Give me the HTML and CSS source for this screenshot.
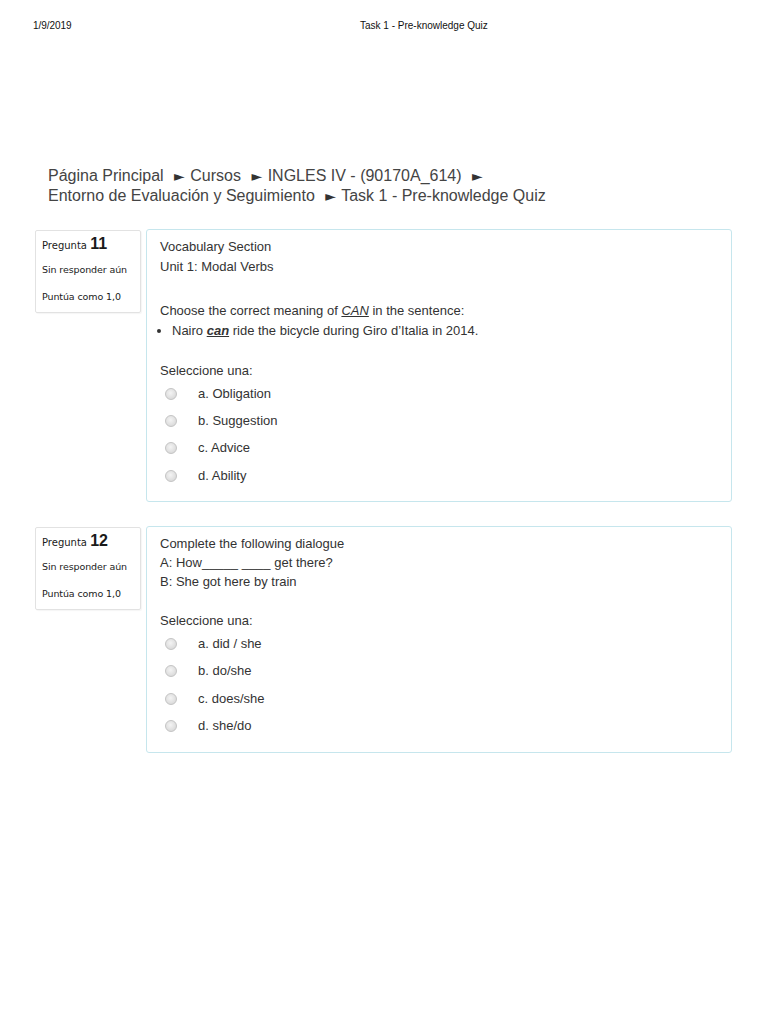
FILE: index.html
```html
<!DOCTYPE html>
<html lang="es">
<head>
<meta charset="utf-8">
<title>Task 1 - Pre-knowledge Quiz</title>
<link rel="stylesheet" href="styles.css">
</head>
<body>
<header class="print-head">
  <span class="print-date">1/9/2019</span>
  <span class="print-title">Task 1 - Pre-knowledge Quiz</span>
</header>

<nav class="breadcrumb">
  <div>Página Principal <span class="sep">►</span> Cursos <span class="sep">►</span> INGLES IV - (90170A_614) <span class="sep">►</span></div>
  <div>Entorno de Evaluación y Seguimiento <span class="sep">►</span> Task 1 - Pre-knowledge Quiz</div>
</nav>

<section class="que">
  <div class="info">
    <h3 class="no">Pregunta <span class="qno">11</span></h3>
    <div class="state">Sin responder aún</div>
    <div class="grade">Puntúa como 1,0</div>
  </div>
  <div class="content">
    <div class="qtext">
      <p class="intro">Vocabulary Section<br>Unit 1: Modal Verbs</p>
      <p class="ask">Choose the correct meaning of <em class="u">CAN</em> in the sentence:</p>
      <ul class="bullets"><li>Nairo <strong class="u"><em>can</em></strong> ride the bicycle during Giro d’Italia in 2014.</li></ul>
    </div>
    <div class="prompt">Seleccione una:</div>
    <div class="answer">
      <div class="opt"><span class="radio"></span><span>a. Obligation</span></div>
      <div class="opt"><span class="radio"></span><span>b. Suggestion</span></div>
      <div class="opt"><span class="radio"></span><span>c. Advice</span></div>
      <div class="opt"><span class="radio"></span><span>d. Ability</span></div>
    </div>
  </div>
</section>

<section class="que">
  <div class="info">
    <h3 class="no">Pregunta <span class="qno">12</span></h3>
    <div class="state">Sin responder aún</div>
    <div class="grade">Puntúa como 1,0</div>
  </div>
  <div class="content">
    <div class="qtext">
      <p class="dialog">Complete the following dialogue<br>A: How_____ ____ get there?<br>B: She got here by train</p>
    </div>
    <div class="prompt">Seleccione una:</div>
    <div class="answer">
      <div class="opt"><span class="radio"></span><span>a. did / she</span></div>
      <div class="opt"><span class="radio"></span><span>b. do/she</span></div>
      <div class="opt"><span class="radio"></span><span>c. does/she</span></div>
      <div class="opt"><span class="radio"></span><span>d. she/do</span></div>
    </div>
  </div>
</section>
</body>
</html>
```

FILE: styles.css
```css
html, body {
  margin: 0;
  padding: 0;
  background: #fff;
}
body {
  font-family: "Liberation Sans", Arial, sans-serif;
  color: #333;
  width: 768px;
}

.print-head {
  display: flex;
  align-items: center;
  height: 18px;
  padding-top: 16px;
  font-size: 10px;
  color: #111;
}
.print-date {
  margin-left: 33px;
  width: 327px;
  letter-spacing: -0.05px;
}
.print-title {
  letter-spacing: 0;
}

.breadcrumb {
  margin-top: 132px;
  margin-left: 48px;
  font-size: 16px;
  line-height: 20px;
  color: #444;
}
.breadcrumb .sep {
  font-family: "DejaVu Sans", sans-serif;
  font-size: 14px;
  line-height: 1;
  margin: 0 1px 0 6px;
  color: #333;
}

.que {
  display: flex;
  align-items: flex-start;
  gap: 5px;
  margin-left: 35px;
  width: 697px;
  margin-top: 23px;
}
.que + .que {
  margin-top: 24px;
}

.info {
  width: 93px;
  height: 74px;
  margin-top: 1px;
  padding: 4px 5px 3px 6px;
  border: 1px solid #e2e2e2;
  border-radius: 2px;
  box-shadow: 1px 1px 1px rgba(0,0,0,0.04);
  font-family: "DejaVu Sans", Verdana, sans-serif;
  color: #1a1a1a;
}
.no {
  margin: 0;
  font-size: 10px;
  font-weight: normal;
  line-height: 18px;
  letter-spacing: 0;
}
.qno {
  font-family: "Liberation Sans", Arial, sans-serif;
  font-size: 16px;
  font-weight: bold;
}
.state {
  margin-top: 8px;
  font-size: 9.5px;
  line-height: 14px;
  letter-spacing: -0.1px;
}
.grade {
  margin-top: 13px;
  font-size: 9.5px;
  line-height: 14px;
  letter-spacing: -0.1px;
}

.content {
  flex: 1;
  padding: 7px 13px 12px 13px;
  border: 1px solid #c6e6ed;
  border-radius: 3px;
  font-size: 13px;
  line-height: 20px;
  color: #333;
}
.qtext p {
  margin: 0;
}
.qtext .ask {
  margin-top: 24px;
}
.qtext .dialog {
  line-height: 19px;
}
.u {
  text-decoration: underline;
}
.bullets {
  margin: 0;
  padding-left: 12px;
}
.prompt {
  margin-top: 20px;
}
.answer {
  margin-top: -1px;
}
.opt {
  display: flex;
  align-items: center;
  height: 27.33px;
}
.radio {
  width: 10px;
  height: 10px;
  margin-left: 5px;
  margin-right: 21px;
  border: 1px solid #c4c4c4;
  border-radius: 50%;
  background: radial-gradient(circle at 45% 40%, #f4f4f4 0%, #dcdcdc 70%, #cfcfcf 100%);
  flex: none;
}
```
